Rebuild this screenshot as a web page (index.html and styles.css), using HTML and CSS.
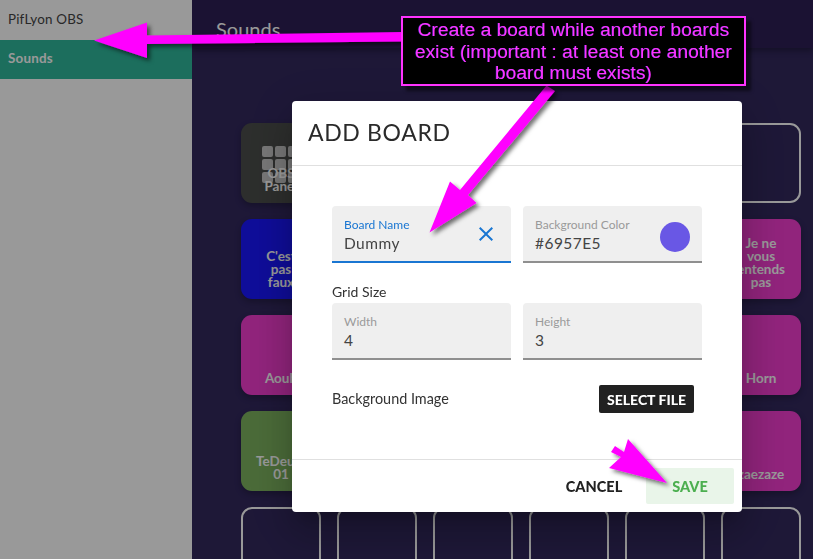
FILE: index.html
```html
<!DOCTYPE html>
<html lang="en">
<head>
<meta charset="utf-8">
<title>Add board</title>
<link rel="stylesheet" href="styles.css">
</head>
<body>
<div class="app">
  <nav class="sidebar">
    <div class="nav-item">PifLyon OBS</div>
    <div class="nav-item active">Sounds</div>
  </nav>
  <main class="main">
    <header class="topbar">Sounds</header>
    <div class="board">
      <div class="tile dark"><span class="pad-icon"><i></i><i></i><i></i><i></i><i></i><i></i><i></i><i></i><i></i></span>OBS Panel</div>
      <div class="tile dark"></div><div class="tile dark"></div><div class="tile dark"></div><div class="tile dark"></div>
      <div class="tile empty"></div>
      <div class="tile blue">C'est pas faux</div>
      <div class="tile pink"></div><div class="tile pink"></div><div class="tile pink"></div><div class="tile pink"></div>
      <div class="tile pink">Je ne vous entends pas</div>
      <div class="tile pink">Aouh</div>
      <div class="tile pink"></div><div class="tile pink"></div><div class="tile pink"></div><div class="tile pink"></div>
      <div class="tile pink">Horn</div>
      <div class="tile green">TeDeum 01</div>
      <div class="tile pink"></div><div class="tile pink"></div><div class="tile pink"></div><div class="tile pink"></div>
      <div class="tile pink">zaezaze</div>
      <div class="tile empty"></div><div class="tile empty"></div><div class="tile empty"></div><div class="tile empty"></div><div class="tile empty"></div><div class="tile empty"></div>
    </div>
  </main>
</div>
<div class="overlay"></div>
<section class="dialog">
  <h2 class="dialog-title">ADD BOARD</h2>
  <div class="dialog-body">
    <div class="field-row">
      <div class="field focused">
        <span class="field-label">Board Name</span>
        <span class="field-value">Dummy</span>
        <svg class="clear-icon" width="24" height="24" viewBox="0 0 24 24"><path d="M19 6.4 17.6 5 12 10.6 6.4 5 5 6.4 10.6 12 5 17.6 6.4 19 12 13.4 17.6 19 19 17.6 13.4 12z"/></svg>
      </div>
      <div class="field">
        <span class="field-label">Background Color</span>
        <span class="field-value">#6957E5</span>
        <span class="swatch"></span>
      </div>
    </div>
    <div class="group-label">Grid Size</div>
    <div class="field-row">
      <div class="field"><span class="field-label">Width</span><span class="field-value">4</span></div>
      <div class="field"><span class="field-label">Height</span><span class="field-value">3</span></div>
    </div>
    <div class="image-row">
      <span class="image-label">Background Image</span>
      <button class="select-file">SELECT FILE</button>
    </div>
  </div>
  <footer class="dialog-actions">
    <button class="action cancel">CANCEL</button>
    <button class="action save">SAVE</button>
  </footer>
</section>
<svg class="arrows" width="813" height="559" viewBox="0 0 813 559">
  <defs><filter id="sh" x="-20%" y="-20%" width="140%" height="140%"><feDropShadow dx="3" dy="3" stdDeviation="2" flood-color="#000" flood-opacity=".55"/></filter></defs>
  <polygon filter="url(#sh)" fill="#ff00ff" points="94,40.5 147,22.5 147,35.5 403,32 403,41.5 147,44 147,58"/>
  <polygon filter="url(#sh)" fill="#ff00ff" points="546.5,85.5 555,91 468,195 476.5,203 429.5,232.5 450,181.5 460,190"/>
  <polygon filter="url(#sh)" fill="#ff00ff" points="667,483 609,468 621,457 611,452 615,446 624,452 628,439"/>
</svg>
<div class="callout">Create a board while another boards exist (important : at least one another board must exists)</div>
</body>
</html>
```
FILE: styles.css
```css
* { box-sizing: border-box; }
html, body { margin: 0; height: 100%; overflow: hidden; }
body { font-family: Lato, "Open Sans", sans-serif; color: #222; }
.app { display: flex; height: 559px; }
.sidebar { width: 192px; flex: none; background: #fff; }
.nav-item { height: 39.5px; padding: 0 0 2px 8px; display: flex; align-items: center; font-size: 13.4px; color: #444; letter-spacing: .2px; }
.nav-item.active { background: #2fb89c; color: #fff; font-weight: 700; }
.main { flex: 1; background: #32285d; min-width: 0; overflow: hidden; }
.topbar { height: 48px; padding: 17px 0 0 24px; font-size: 20px; line-height: 24px; color: #fff; background: #2d1e55; box-shadow: 0 3px 6px rgba(0,0,0,.3); overflow: hidden; }
.board { display: grid; grid-template-columns: repeat(6, 80px); grid-auto-rows: 80px; gap: 16px; padding: 75px 0 0 49px; }
.tile { position: relative; isolation: isolate; border-radius: 11px; display: flex; align-items: flex-end; justify-content: center; text-align: center; padding: 0 16px 10px; font-size: 13.5px; font-weight: 700; line-height: 13px; color: #fff; box-shadow: 0 3px 6px rgba(0,0,0,.25); }
.dark { background: #4b4d4b; }
.blue { background: #1916ff; }
.pink { background: #f23ccf; }
.green { background: #7db35f; }
.empty { background: transparent; border: 2px solid #fff; box-shadow: none; }
.pad-icon { position: absolute; z-index: -1; left: 21px; top: 23px; display: grid; grid-template-columns: repeat(3, 11px); grid-auto-rows: 11px; gap: 2px; }
.pad-icon i { background: #c6c6c6; border-radius: 2px; }
.overlay { position: fixed; inset: 0; background: rgba(0,0,0,.4); }
.dialog { position: fixed; left: 292px; top: 101px; width: 450px; height: 411px; background: #fff; border-radius: 4px; display: flex; flex-direction: column; box-shadow: 0 11px 15px -7px rgba(0,0,0,.2), 0 24px 38px 3px rgba(0,0,0,.14), 0 9px 46px 8px rgba(0,0,0,.12); }
.dialog-title { margin: 0; height: 65px; flex: none; padding: 15px 16px 0; font-size: 23px; line-height: 32px; font-weight: 400; letter-spacing: .65px; color: #2a2a2a; border-bottom: 1px solid #e0e0e0; }
.dialog-body { flex: 1; padding: 40px 40px 0; display: flex; flex-direction: column; }
.field-row { display: flex; gap: 12px; }
.field { position: relative; width: 179px; height: 57px; background: #efefef; border-radius: 4px 4px 0 0; border-bottom: 2px solid #8f8f8f; padding: 12px 12px 0; display: flex; flex-direction: column; }
.field.focused { border-bottom-color: #1976d2; }
.field-label { font-size: 12px; line-height: 14px; color: #9a9a9a; }
.focused .field-label { color: #1976d2; }
.field-value { font-size: 15.5px; line-height: 22px; color: #444; letter-spacing: .45px; }
.clear-icon { position: absolute; right: 13px; top: 16px; fill: #1976d2; }
.swatch { position: absolute; right: 12px; top: 16px; width: 30px; height: 30px; border-radius: 50%; background: #6957e5; }
.group-label { margin-top: 20px; height: 20px; font-size: 14px; line-height: 17px; color: #333; }
.image-row { display: flex; align-items: center; justify-content: space-between; margin-top: 25px; padding-right: 8px; color: #333; }
.image-label { font-size: 14.4px; padding-bottom: 2px; }
.select-file { width: 95px; height: 28px; padding: 0; border: 0; border-radius: 2px; background: #212121; color: #fff; font: 900 14px Lato, sans-serif; }
.dialog-actions { flex: none; height: 53px; border-top: 1px solid #e0e0e0; display: flex; align-items: center; justify-content: flex-end; gap: 8px; padding: 0 8px 0 0; }
.action { height: 36px; border: 0; border-radius: 2px; background: none; font: 900 14.5px Lato, sans-serif; }
.cancel { width: 88px; color: #222; }
.save { width: 88px; background: #e9f5e9; color: #4caf50; }
.arrows { position: fixed; left: 0; top: 0; pointer-events: none; }
.callout { position: fixed; left: 401px; top: 16px; width: 345px; height: 70px; padding: 1px 4px 0; background: #000; border: 2px solid #ff33ff; box-shadow: 5px 5px 3px rgba(0,0,0,.5); color: #ff33ff; font: 19.2px/21.5px "Liberation Sans", Arial, sans-serif; text-align: center; text-shadow: -.5px 0 rgba(90,70,255,.7); }
```
